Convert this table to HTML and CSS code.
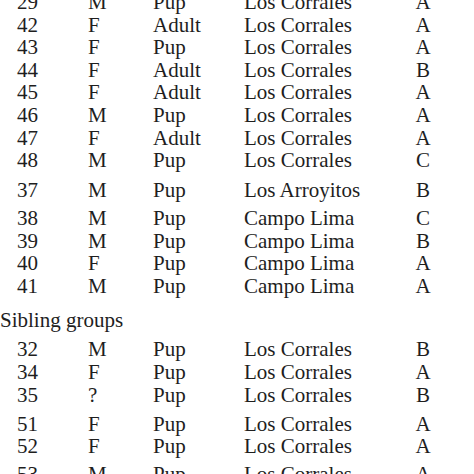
FILE: index.html
```html
<!DOCTYPE html>
<html>
<head>
<meta charset="utf-8">
<link rel="stylesheet" href="styles.css">
</head>
<body>
<div class="page">
  <div class="group">
    <div class="row"><span>29</span><span>M</span><span>Pup</span><span>Los Corrales</span><span class="g">A</span></div>
    <div class="row"><span>42</span><span>F</span><span>Adult</span><span>Los Corrales</span><span class="g">A</span></div>
    <div class="row"><span>43</span><span>F</span><span>Pup</span><span>Los Corrales</span><span class="g">A</span></div>
    <div class="row"><span>44</span><span>F</span><span>Adult</span><span>Los Corrales</span><span class="g">B</span></div>
    <div class="row"><span>45</span><span>F</span><span>Adult</span><span>Los Corrales</span><span class="g">A</span></div>
    <div class="row"><span>46</span><span>M</span><span>Pup</span><span>Los Corrales</span><span class="g">A</span></div>
    <div class="row"><span>47</span><span>F</span><span>Adult</span><span>Los Corrales</span><span class="g">A</span></div>
    <div class="row"><span>48</span><span>M</span><span>Pup</span><span>Los Corrales</span><span class="g">C</span></div>
  </div>
  <div class="group gap-b">
    <div class="row"><span>37</span><span>M</span><span>Pup</span><span>Los Arroyitos</span><span class="g">B</span></div>
  </div>
  <div class="group gap-c">
    <div class="row"><span>38</span><span>M</span><span>Pup</span><span>Campo Lima</span><span class="g">C</span></div>
    <div class="row"><span>39</span><span>M</span><span>Pup</span><span>Campo Lima</span><span class="g">B</span></div>
    <div class="row"><span>40</span><span>F</span><span>Pup</span><span>Campo Lima</span><span class="g">A</span></div>
    <div class="row"><span>41</span><span>M</span><span>Pup</span><span>Campo Lima</span><span class="g">A</span></div>
  </div>
  <div class="heading">Sibling groups</div>
  <div class="group gap-d">
    <div class="row"><span>32</span><span>M</span><span>Pup</span><span>Los Corrales</span><span class="g">B</span></div>
    <div class="row"><span>34</span><span>F</span><span>Pup</span><span>Los Corrales</span><span class="g">A</span></div>
    <div class="row"><span>35</span><span>?</span><span>Pup</span><span>Los Corrales</span><span class="g">B</span></div>
  </div>
  <div class="group gap-e">
    <div class="row"><span>51</span><span>F</span><span>Pup</span><span>Los Corrales</span><span class="g">A</span></div>
    <div class="row"><span>52</span><span>F</span><span>Pup</span><span>Los Corrales</span><span class="g">A</span></div>
  </div>
  <div class="group gap-f">
    <div class="row"><span>53</span><span>M</span><span>Pup</span><span>Los Corrales</span><span class="g">A</span></div>
  </div>
</div>
</body>
</html>
```

FILE: styles.css
```css
html, body {
  margin: 0;
  padding: 0;
  background: #ffffff;
  overflow: hidden;
}

.page {
  margin-top: -9px;
  font-family: "Liberation Serif", "Times New Roman", serif;
  font-size: 21px;
  line-height: 22.6px;
  color: #1e1e1e;
}

.row {
  display: grid;
  grid-template-columns: 71px 65px 91px 156px 46px;
  padding-left: 17px;
  white-space: nowrap;
}

.row .g {
  text-align: center;
}

.gap-b { margin-top: 7.4px; }
.gap-c { margin-top: 5.4px; }
.gap-d { margin-top: 7.4px; }
.gap-e { margin-top: 6.4px; }
.gap-f { margin-top: 5.5px; }

.heading {
  margin-top: 11px;
  padding-left: 0;
  white-space: nowrap;
}
```
